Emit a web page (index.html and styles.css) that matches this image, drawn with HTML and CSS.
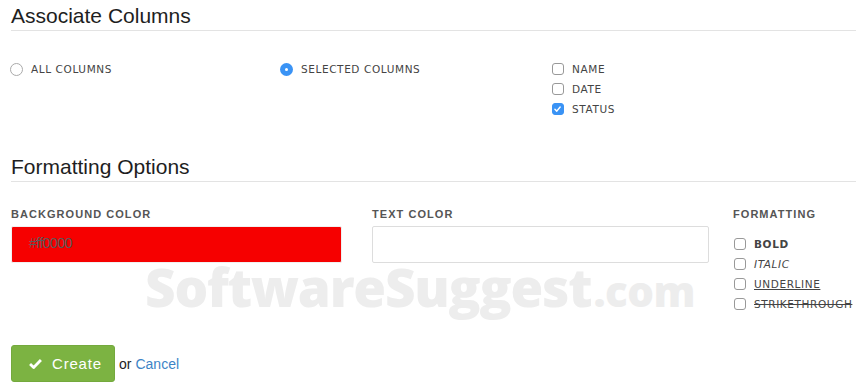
FILE: index.html
```html
<!DOCTYPE html>
<html>
<head>
<meta charset="utf-8">
<link rel="stylesheet" href="styles.css">
</head>
<body>
<div class="page">
  <h2 class="section-title">Associate Columns</h2>
  <div class="assoc">
    <label class="opt"><span class="radio"></span><span class="opt-text">ALL COLUMNS</span></label>
    <label class="opt"><span class="radio on"></span><span class="opt-text">SELECTED COLUMNS</span></label>
    <div class="col-list">
      <label class="opt"><span class="check"></span><span class="opt-text">NAME</span></label>
      <label class="opt"><span class="check"></span><span class="opt-text">DATE</span></label>
      <label class="opt"><span class="check on"><svg viewBox="0 0 12 12" width="12" height="12"><path d="M3.2 6.3 L5.2 8.3 L8.9 3.8" fill="none" stroke="#fff" stroke-width="1.6" stroke-linecap="round" stroke-linejoin="round"/></svg></span><span class="opt-text">STATUS</span></label>
    </div>
  </div>

  <h2 class="section-title">Formatting Options</h2>
  <div class="fmt">
    <div class="field bg">
      <div class="field-label">BACKGROUND COLOR</div>
      <div class="input red">#ff0000</div>
    </div>
    <div class="field tc">
      <div class="field-label">TEXT COLOR</div>
      <div class="input"></div>
    </div>
    <div class="field fm">
      <div class="field-label">FORMATTING</div>
      <div class="fm-list">
        <label class="opt"><span class="check"></span><span class="opt-text b">BOLD</span></label>
        <label class="opt"><span class="check"></span><span class="opt-text i">ITALIC</span></label>
        <label class="opt"><span class="check"></span><span class="opt-text u">UNDERLINE</span></label>
        <label class="opt"><span class="check"></span><span class="opt-text s">STRIKETHROUGH</span></label>
      </div>
    </div>
  </div>

  <div class="actions">
    <button class="btn-create"><svg viewBox="0 0 16 16" width="15" height="15"><path d="M2.2 8.6 L6 12.2 L13.8 4.2" fill="none" stroke="#fff" stroke-width="3" stroke-linejoin="round"/></svg><span>Create</span></button>
    <span class="or">or</span> <a class="cancel" href="#">Cancel</a>
  </div>
  <div class="watermark">SoftwareSuggest<span class="dotcom">.com</span></div>
</div>
</body>
</html>
```

FILE: styles.css
```css
* { box-sizing: border-box; }
body { margin: 0; background: #fff; font-family: "Liberation Sans", Arial, sans-serif; color: #333; }
.page { position: relative; padding: 0 0 0 11px; width: 856px; height: 388px; overflow: hidden; }
.section-title {
  margin: 0;
  font-family: "Liberation Sans", Arial, sans-serif;
  font-weight: normal;
  font-size: 21px;
  line-height: 24px;
  padding-top: 4px;
  padding-bottom: 2px;
  color: #1e1e1e;
  border-bottom: 1px solid #e3e3e3;
}
.assoc { display: grid; grid-template-columns: 270px 272px 1fr; margin-left: -1px; padding-top: 28px; height: 120px; }
.opt { display: flex; align-items: center; height: 20px; font-family: "DejaVu Sans", Verdana, sans-serif; font-size: 10.5px; color: #444; letter-spacing: 0.6px; }
.opt-text { line-height: 20px; }
.radio { width: 13px; height: 13px; border-radius: 50%; border: 1px solid #aaa; margin-right: 8px; position: relative; background: #fff; flex: none; }
.radio.on { border: none; background: #3a93f5; }
.radio.on::after { content: ""; position: absolute; left: 5px; top: 5px; width: 3px; height: 3px; border-radius: 50%; background: #fff; }
.check { width: 12px; height: 12px; border: 1px solid #999; border-radius: 3px; margin-right: 8px; flex: none; background: #fff; display: flex; }
.check.on { background: #3a93f5; border-color: #3a93f5; }
.check.on svg { margin: -1px 0 0 -1px; }
.col-list { display: flex; flex-direction: column; }
.fmt { display: flex; padding-top: 24px; }
.field-label { font-weight: bold; font-size: 11px; letter-spacing: 1.05px; color: #555; line-height: 16px; }
.field.bg { width: 361px; }
.field.tc { width: 361px; }
.input { margin-top: 4px; height: 37px; border: 1px solid #ddd; border-radius: 2px; background: #fff; font-size: 14px; color: #555; padding: 8px 17px; letter-spacing: -0.5px; }
.bg .input { width: 331px; }
.tc .input { width: 337px; }
.input.red { background: #f60000; border-color: #f0f0f0; color: #5a5a5a; }
.fm-list { padding-top: 12px; margin-left: 1px; }
.fm-list .opt { font-size: 10.5px; }
.b { font-weight: bold; }
.i { font-style: italic; }
.u { text-decoration: underline; }
.s { text-decoration: line-through; }
.actions { position: absolute; left: 11px; top: 345px; display: flex; align-items: center; font-size: 15px; }
.btn-create { display: flex; align-items: center; height: 37px; width: 104px; background: #7cb342; border: 1px solid #74a93d; border-radius: 3px; color: #fff; font-family: "Liberation Sans", Arial, sans-serif; font-size: 15px; letter-spacing: 0.8px; padding: 0 0 0 16px; }
.btn-create svg { margin-right: 9px; }
.or { margin-left: 4px; color: #222; font-size: 14px; }
.cancel { margin-left: 4px; color: #3c84c6; text-decoration: none; font-size: 14px; }
.watermark { position: absolute; left: 145px; top: 252px; font-family: "Open Sans", sans-serif; font-weight: 800; font-size: 53px; color: #ededed; letter-spacing: -1.2px; pointer-events: none; z-index: -1; line-height: 70px; }
.dotcom { font-size: 42px; letter-spacing: -0.5px; margin-left: 2px; }
```
